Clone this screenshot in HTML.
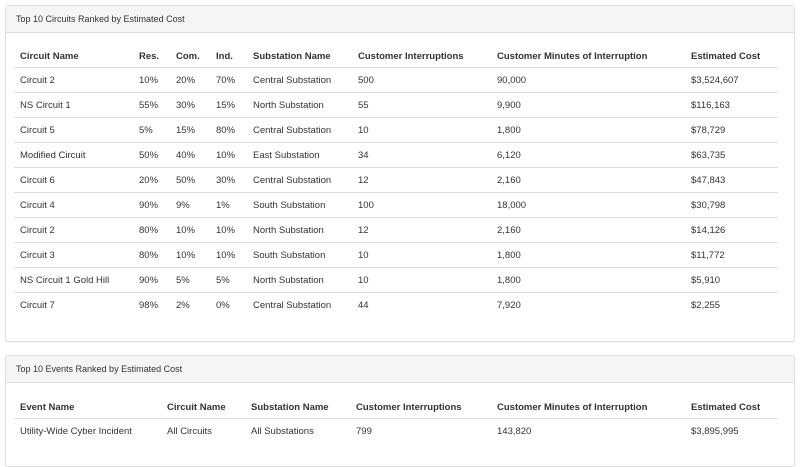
<!DOCTYPE html><html><head><style>
body{margin:0;width:806px;height:450px;background:#fff;font-family:"Liberation Sans",Arial,sans-serif;font-size:9.5px;color:#333;position:relative;overflow:hidden}
.p{position:absolute;left:5px;width:788px;border:1px solid #ddd;border-radius:3px;box-shadow:0 1px 1px rgba(0,0,0,.05)}
.h{height:26px;background:#f5f5f5;border-bottom:1px solid #ddd;line-height:26px;padding-left:10px;font-size:9px;color:#333}
.r{position:absolute;left:14px;width:764px;height:24px;border-bottom:1px solid #ddd}
.r span{position:absolute;top:7px;white-space:nowrap}
.th span{font-weight:bold;color:#333;top:8px}
.r.last{border-bottom:none}
</style></head><body>
<div class="p" style="top:5px;height:335px"><div class="h">Top 10 Circuits Ranked by Estimated Cost</div></div>
<div class="p" style="top:355px;height:110px"><div class="h">Top 10 Events Ranked by Estimated Cost</div></div>
<div id="t1"></div><div id="t2"></div>
<script>
var c1=[20,139,176,216,253,358,497,691];
var rows=[["Circuit Name","Res.","Com.","Ind.","Substation Name","Customer Interruptions","Customer Minutes of Interruption","Estimated Cost"],
["Circuit 2","10%","20%","70%","Central Substation","500","90,000","$3,524,607"],
["NS Circuit 1","55%","30%","15%","North Substation","55","9,900","$116,163"],
["Circuit 5","5%","15%","80%","Central Substation","10","1,800","$78,729"],
["Modified Circuit","50%","40%","10%","East Substation","34","6,120","$63,735"],
["Circuit 6","20%","50%","30%","Central Substation","12","2,160","$47,843"],
["Circuit 4","90%","9%","1%","South Substation","100","18,000","$30,798"],
["Circuit 2","80%","10%","10%","North Substation","12","2,160","$14,126"],
["Circuit 3","80%","10%","10%","South Substation","10","1,800","$11,772"],
["NS Circuit 1 Gold Hill","90%","5%","5%","North Substation","10","1,800","$5,910"],
["Circuit 7","98%","2%","0%","Central Substation","44","7,920","$2,255"]];
function build(id,cols,rows,top){var h="";rows.forEach(function(r,i){var y=i==0?top:top+25+(i-1)*25;
h+='<div class="r'+(i==0?' th':'')+(i==rows.length-1?' last':'')+'" style="top:'+y+'px">';
r.forEach(function(t,j){h+='<span style="left:'+(cols[j]-14)+'px">'+t+'</span>'});h+='</div>'});document.getElementById(id).innerHTML=h;}
build("t1",c1,rows,43);
build("t2",[20,167,251,356,497,691],[["Event Name","Circuit Name","Substation Name","Customer Interruptions","Customer Minutes of Interruption","Estimated Cost"],["Utility-Wide Cyber Incident","All Circuits","All Substations","799","143,820","$3,895,995"]],394);
</script>
</body></html>
